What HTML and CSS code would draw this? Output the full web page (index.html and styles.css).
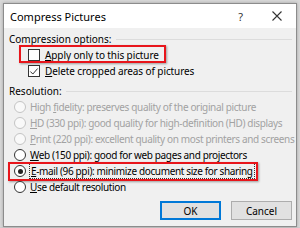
FILE: index.html
```html
<!DOCTYPE html>
<html>
<head>
<meta charset="utf-8">
<link rel="stylesheet" href="styles.css">
</head>
<body>
<div class="backdrop">
  <div class="dialog">
    <div class="titlebar">
      <span class="title">Compress Pictures</span>
      <span class="help">?</span>
      <svg class="close" width="10" height="10" viewBox="0 0 10 10"><path d="M0.5 0.5L9.5 9.5M9.5 0.5L0.5 9.5" stroke="#333" stroke-width="1.1" fill="none"/></svg>
    </div>
    <div class="content">
      <div class="group-head"><span>Compression options:</span><div class="sep"></div></div>
      <div class="row check-row highlight-a">
        <span class="checkbox"></span>
        <span class="label"><u>A</u>pply only to this picture</span>
      </div>
      <div class="row check-row">
        <span class="checkbox checked"><svg width="11" height="11" viewBox="0 0 11 11"><path d="M1.5 5.5L4.2 8.3L9.5 2.2" stroke="#333" stroke-width="1.1" fill="none"/></svg></span>
        <span class="label"><u>D</u>elete cropped areas of pictures</span>
      </div>
      <div class="group-head res"><span>Resolution:</span><div class="sep"></div></div>
      <div class="radios">
        <div class="row radio-row disabled"><span class="radio"></span><span class="label">High <u>f</u>idelity: preserves quality of the original picture</span></div>
        <div class="row radio-row disabled"><span class="radio"></span><span class="label"><u>H</u>D (330 ppi): good quality for high-definition (HD) displays</span></div>
        <div class="row radio-row disabled"><span class="radio"></span><span class="label"><u>P</u>rint (220 ppi): excellent quality on most printers and screens</span></div>
        <div class="row radio-row"><span class="radio"></span><span class="label"><u>W</u>eb (150 ppi): good for web pages and projectors</span></div>
        <div class="row radio-row highlight-b"><span class="radio selected"></span><span class="label focus"><u>E</u>-mail (96 ppi): minimize document size for sharing</span></div>
        <div class="row radio-row"><span class="radio"></span><span class="label"><u>U</u>se default resolution</span></div>
      </div>
      <div class="buttons">
        <button class="btn default">OK</button>
        <button class="btn">Cancel</button>
      </div>
    </div>
  </div>
</div>
</body>
</html>
```
FILE: styles.css
```css
html, body {
  margin: 0;
  padding: 0;
}
body {
  width: 300px;
  height: 228px;
  overflow: hidden;
  background: #cfcfcf;
  font-family: "Noto Sans", "Open Sans", sans-serif;
  font-size: 10px;
  color: #000;
}
.backdrop {
  padding: 3px 3px 0 3px;
  background: #d8d8d8;
}
.dialog {
  width: 292px;
  height: 222px;
  border: 1px solid #8c8c8c;
  background: #f0f0f0;
  box-shadow: 0 0 3px rgba(0,0,0,0.25);
  overflow: hidden;
}
.titlebar {
  height: 24px;
  background: #ffffff;
  display: flex;
  align-items: center;
  padding-left: 6px;
}
.title {
  font-size: 11px;
  flex: 1;
  color: #000;
}
.help {
  font-size: 11px;
  color: #333;
  margin-right: 29px;
}
.close {
  margin-right: 14px;
}
.content {
  padding: 3px 4px 0 5px;
  position: relative;
}
.group-head {
  height: 16px;
  display: flex;
  align-items: center;
  gap: 4px;
  color: #000;
  white-space: nowrap;
}
.group-head.res {
  margin-top: 4px;
}
.sep {
  flex: 1;
  height: 1px;
  background: #dcdcdc;
  margin-top: 1px;
}
.row {
  height: 16px;
  display: flex;
  align-items: center;
  white-space: nowrap;
}
.radios .label {
  letter-spacing: -0.36px;
}
.check-row .label {
  letter-spacing: -0.1px;
}
.check-row {
  padding-left: 19px;
}
.radio-row {
  padding-left: 5px;
}
.checkbox {
  width: 10px;
  height: 10px;
  border: 1px solid #333;
  background: #fff;
  display: inline-flex;
  align-items: center;
  justify-content: center;
  margin-right: 5px;
  flex: none;
}
.checkbox svg {
  display: block;
}
.radio {
  width: 10px;
  height: 10px;
  border: 1px solid #333;
  border-radius: 50%;
  background: #fff;
  margin-right: 4px;
  position: relative;
  flex: none;
}
.radio.selected::after {
  content: "";
  position: absolute;
  left: 2.5px;
  top: 2.5px;
  width: 5px;
  height: 5px;
  border-radius: 50%;
  background: #222;
}
.disabled .radio {
  border-color: #c4c4c4;
  background: #f9f9f9;
}
.disabled .label {
  color: #a2a2a2;
}
.label u {
  text-decoration-thickness: 1px;
  text-underline-offset: 1px;
}
.highlight-a, .highlight-b {
  position: relative;
}
.highlight-a::before {
  content: "";
  position: absolute;
  left: 10px;
  top: -2px;
  width: 143px;
  height: 14px;
  border: 2px solid #e8151b;
  box-shadow: 1px 1px 2px rgba(0,0,0,0.35);
}
.highlight-b::before {
  content: "";
  position: absolute;
  left: -1px;
  top: -1px;
  width: 246px;
  height: 15px;
  border: 2px solid #e8151b;
  box-shadow: 1px 1px 2px rgba(0,0,0,0.35);
}
.focus {
  outline: 1px dotted #333;
  outline-offset: 0;
  padding: 0 1px;
}
.buttons {
  display: flex;
  justify-content: flex-end;
  gap: 10px;
  margin-top: 6px;
}
.btn {
  font-family: "Noto Sans", "Open Sans", sans-serif;
  font-size: 10px;
  width: 61px;
  height: 19px;
  padding: 0;
  background: #e1e1e1;
  border: 1px solid #adadad;
  color: #000;
}
.btn.default {
  border: 1px solid #0078d7;
  box-shadow: inset 0 0 0 1px #0078d7;
}
```
